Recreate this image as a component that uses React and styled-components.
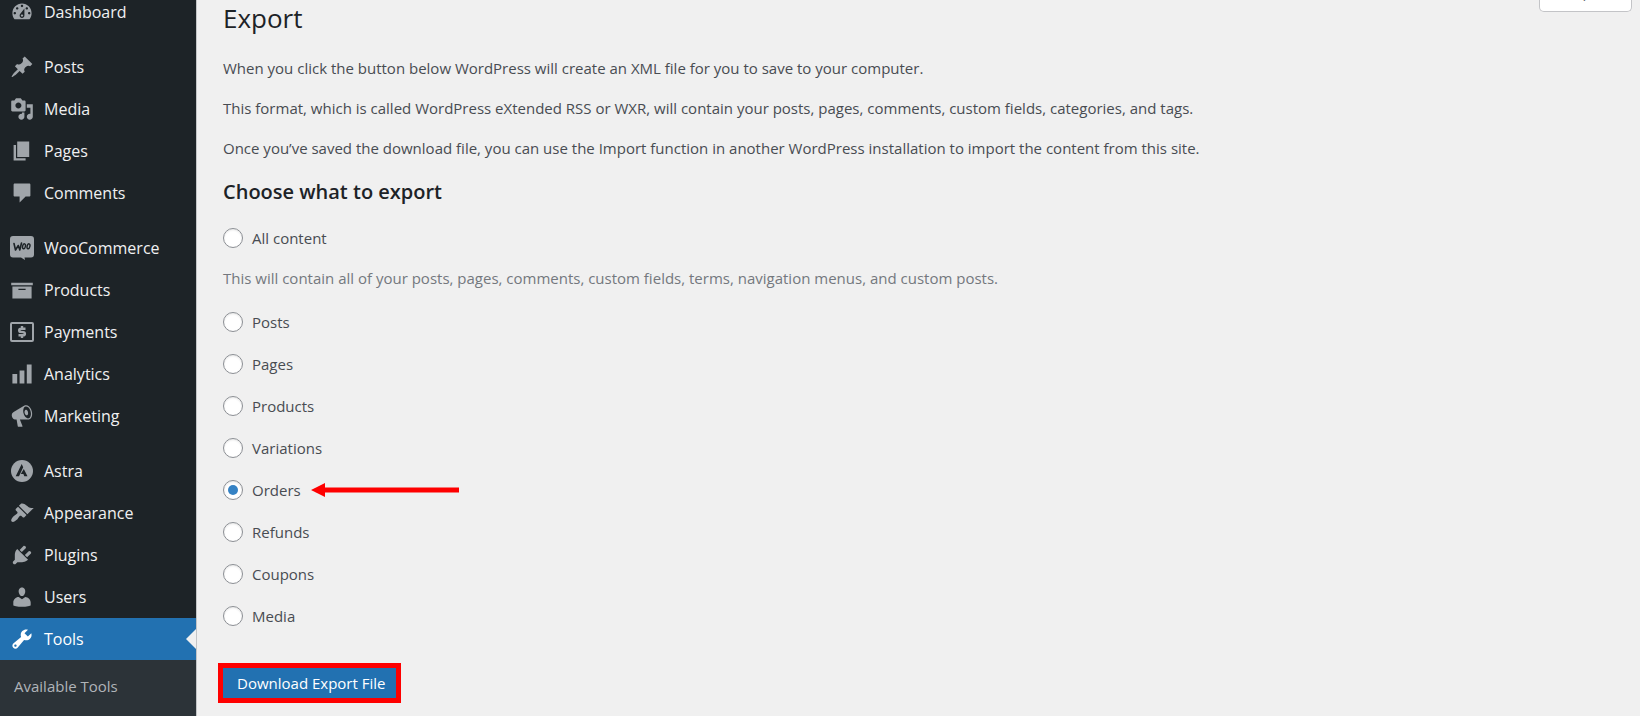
import React, { useState } from "react";
import styled, { createGlobalStyle, css } from "styled-components";

const GlobalStyle = createGlobalStyle`
  *, *::before, *::after { box-sizing: border-box; }
  html, body, #root { height: 100%; }
  body {
    margin: 0;
    overflow: hidden;
    background: #f0f0f0;
    color: #484c52;
    font: 15px/22px "Segoe UI", "Open Sans", "Noto Sans", sans-serif;
  }
`;

const Page = styled.div`
  display: flex;
  height: 100%;
  overflow: hidden;
`;

/* ---------- admin menu ---------- */

const Sidebar = styled.nav`
  flex: 0 0 197px;
  background: #1d2327;
  border-right: 1px solid #c3c5c7;
  overflow: hidden;
`;

const MenuList = styled.ul`
  list-style: none;
  margin: -9px 0 0;
  padding: 0;
`;

const MenuItem = styled.li`
  margin-top: ${(p) => (p.$group ? "13px" : "0")};
`;

const MenuLink = styled.a`
  position: relative;
  display: flex;
  align-items: center;
  gap: 10px;
  height: 42px;
  padding-left: 10px;
  color: #f0f0f1;
  font-size: 16px;
  font-weight: 500;
  text-decoration: none;
  ${(p) =>
    p.$current &&
    css`
      background: #2271b1;
      color: #fff;
      &::after {
        content: "";
        position: absolute;
        right: 0;
        top: 11px;
        border: 10px solid transparent;
        border-left-width: 0;
        border-right-color: #f0f0f0;
      }
    `}
`;

const MenuIcon = styled.svg`
  flex: none;
  width: 24px;
  height: 24px;
  fill: ${(p) => (p.$current ? "#fff" : "#a0a5aa")};
`;

const SubMenu = styled.ul`
  list-style: none;
  margin: 0;
  padding: 9px 0;
  background: #2c3338;
`;

const SubLink = styled.a`
  display: block;
  padding: 6px 14px;
  color: #b0b4b8;
  text-decoration: none;
`;

/* ---------- content ---------- */

const Content = styled.main`
  flex: 1;
  min-width: 0;
  display: flex;
  align-items: flex-start;
  justify-content: space-between;
  padding: 0 8px 0 26px;
`;

const Wrap = styled.div`
  min-width: 0;
`;

const Title = styled.h1`
  margin: 0 0 21px;
  color: #1d2327;
  font-size: 26px;
  font-weight: 400;
  line-height: 36px;
`;

const Text = styled.p`
  margin: 0 0 18px;
`;

const Description = styled.p`
  margin: 0 0 22px;
  color: #74787e;
`;

const SubTitle = styled.h2`
  margin: 0 0 20px;
  color: #1d2327;
  font-size: 20px;
  font-weight: 600;
  line-height: 30px;
`;

const Choices = styled.fieldset`
  margin: 0 0 16px;
  padding: 0;
  border: 0;
`;

const Choice = styled.div`
  display: flex;
  align-items: center;
  margin-bottom: ${(p) => (p.$described ? "18px" : "20px")};
`;

const ChoiceLabel = styled.label`
  display: flex;
  align-items: center;
  gap: 9px;
`;

const Radio = styled.input`
  appearance: none;
  display: grid;
  place-items: center;
  width: 20px;
  height: 20px;
  margin: 0;
  background: #fff;
  border: 1px solid #8c8f94;
  border-radius: 50%;
  box-shadow: inset 0 1px 2px rgba(0, 0, 0, 0.1);
  &:checked::before {
    content: "";
    width: 10px;
    height: 10px;
    border-radius: 50%;
    background: #3582c4;
  }
`;

const Arrow = styled.svg`
  width: 148px;
  height: 14px;
  margin-left: 10px;
  fill: #fe0000;
`;

const Highlight = styled.div`
  width: fit-content;
  margin-left: -5px;
  border: 5px solid #fe0000;
`;

const PrimaryButton = styled.button`
  display: block;
  height: 30px;
  padding: 0 11px 0 14px;
  border: 0;
  background: #2271b1;
  color: #fff;
  font: inherit;
  font-weight: 500;
`;

const HelpTab = styled.button`
  flex: none;
  display: flex;
  align-items: center;
  justify-content: center;
  gap: 10px;
  width: 93px;
  height: 42px;
  margin-top: -30px;
  border: 1px solid #c3c4c7;
  border-top: 0;
  border-radius: 0 0 5px 5px;
  background: #fff;
  color: #646970;
  font: inherit;
`;

const Caret = styled.span`
  border: 5px solid transparent;
  border-top-color: currentColor;
  border-bottom: 0;
`;

/* ---------- icons ---------- */

const paths = {
  dashboard:
    "M3.76 16h12.48c1.1-1.37 1.76-3.11 1.76-5 0-4.42-3.58-8-8-8s-8 3.58-8 8c0 1.89.66 3.63 1.76 5zM10 4c.55 0 1 .45 1 1s-.45 1-1 1-1-.45-1-1 .45-1 1-1zM6 6c.55 0 1 .45 1 1s-.45 1-1 1-1-.45-1-1 .45-1 1-1zm8 0c.55 0 1 .45 1 1s-.45 1-1 1-1-.45-1-1 .45-1 1-1zm-5.370 5.550L12 7v6c0 1.100-.9 2-2 2s-2-.9-2-2c0-.57.24-1.080.63-1.450zM4 10c.55 0 1 .45 1 1s-.45 1-1 1-1-.45-1-1 .45-1 1-1zm12 0c.55 0 1 .45 1 1s-.45 1-1 1-1-.45-1-1 .45-1 1-1zm-5 3c0-.55-.45-1-1-1s-1 .45-1 1 .45 1 1 1 1-.45 1-1z",
  post: "M10.44 3.02l1.82-1.82 6.36 6.35-1.83 1.82c-1.05-.68-2.48-.57-3.41.36l-.75.75c-.92.93-1.04 2.35-.35 3.41l-1.83 1.82-2.41-2.41-2.8 2.79c-.42.42-3.38 2.71-3.8 2.29s1.86-3.39 2.28-3.81l2.79-2.79L4.1 9.36l1.83-1.82c1.05.69 2.48.57 3.4-.36l.75-.75c.93-.92 1.05-2.35.36-3.41z",
  media:
    "M13 11V4c0-.55-.45-1-1-1h-1.67L9 1H5L3.67 3H2c-.55 0-1 .45-1 1v7c0 .55.45 1 1 1h10c.55 0 1-.45 1-1zM7 4.5c1.38 0 2.5 1.12 2.5 2.5S8.38 9.5 7 9.5 4.5 8.38 4.5 7 5.62 4.5 7 4.5zM14 6h5v10.5c0 1.38-1.12 2.5-2.5 2.5S14 17.88 14 16.5s1.12-2.5 2.5-2.5c.17 0 .34.02.5.05V9h-3V6zm-4 8.05V13h2v3.5c0 1.38-1.12 2.5-2.5 2.5S7 17.88 7 16.5 8.12 14 9.5 14c.17 0 .34.02.5.05z",
  page: "M6 15V2h10v13H6zm-1 1h8v2H3V5h2v11z",
  comments:
    "M4 2h12c.55 0 1 .45 1 1v9c0 .55-.45 1-1 1h-3l-5 5v-5H4c-.55 0-1-.45-1-1V3c0-.55.45-1 1-1z",
  archive: "M19 4v2H1V4h18zM2 7h16v10H2V7zm11 3V9H7v1h6z",
  chart: "M18 18V2h-4v16h4zm-6 0V7H8v11h4zm-6 0v-8H2v8h4z",
  megaphone:
    "M18.15 5.94c.46 1.62.38 3.22-.02 4.48-.42 1.28-1.26 2.18-2.3 2.48-.16.06-.26.06-.4.06-.06.02-.12.02-.18.02-.06.02-.14.02-.22.02h-6.8l2.22 5.5c.02.14-.06.26-.14.34-.08.1-.24.16-.34.16H6.95c-.1 0-.26-.06-.34-.16-.08-.08-.16-.2-.14-.34l-1-5.5H4.25l-.02-.02c-.5.06-1.08-.18-1.54-.62s-.88-1.08-1.06-1.88c-.24-.8-.2-1.56-.02-2.2.18-.62.58-1.08 1.06-1.3l.02-.02 9-5.4c.1-.06.18-.1.24-.16.06-.04.14-.08.24-.12.16-.08.28-.12.5-.18 1.04-.3 2.24.1 3.22.98s1.84 2.24 2.26 3.86zm-2.58 5.98h-.02c.4-.1.74-.34 1.04-.7.58-.7.86-1.76.86-3.04 0-.64-.1-1.3-.28-1.98-.34-1.36-1.02-2.5-1.78-3.24s-1.68-1.1-2.46-.88c-.82.22-1.4.96-1.7 2-.32 1.04-.28 2.36.06 3.72.38 1.36 1 2.5 1.8 3.24.78.74 1.62 1.1 2.48.88zm-2.54-7.08c.22-.04.42-.02.62.04.38.16.76.48 1.02 1s.42 1.2.42 1.78c0 .3-.04.56-.12.8-.18.48-.44.84-.86.94-.34.1-.8-.06-1.14-.4s-.64-.86-.78-1.5c-.18-.62-.12-1.24.02-1.72s.48-.84.82-.94z",
  appearance:
    "M14.48 11.06L7.41 3.99l1.5-1.5c.5-.56 2.3-.47 3.51.32 1.21.8 1.43 1.28 2.91 2.1 1.18.64 2.45 1.26 4.45.85zm-.71.71L6.7 4.7 4.93 6.47c-.39.39-.39 1.02 0 1.41l1.06 1.06c.39.39.39 1.03 0 1.42-.6.6-1.43 1.11-2.21 1.69-.35.26-.7.53-1.01.84C1.43 14.23.4 16.08 1.4 17.07c.99 1 2.84-.03 4.18-1.36.31-.31.58-.66.85-1.02.57-.78 1.08-1.61 1.69-2.21.39-.39 1.02-.39 1.41 0l1.06 1.06c.39.39 1.02.39 1.41 0z",
  plugins:
    "M13.11 4.36L9.87 7.6 8 5.73l3.24-3.24c.35-.34 1.05-.2 1.56.32.52.51.66 1.21.31 1.55zm-8 1.77l.91-1.12 9.01 9.01-1.19.84c-.71.71-2.63 1.16-3.82 1.16H6.14L4.9 17.26c-.59.59-1.54.59-2.12 0-.59-.58-.59-1.53 0-2.12l1.24-1.24v-3.88c0-1.13.4-3.19 1.09-3.89zm7.26 3.97l3.24-3.24c.34-.35 1.04-.21 1.55.31.52.51.66 1.21.31 1.55l-3.24 3.25z",
  users:
    "M10 9.25c-2.27 0-2.73-3.44-2.73-3.44C7 4.02 7.82 2 9.97 2c2.16 0 2.98 2.02 2.71 3.81 0 0-.41 3.44-2.68 3.44zm0 2.57L12.72 10c2.39 0 4.52 2.33 4.52 4.53v2.49s-3.65 1.13-7.24 1.13c-3.65 0-7.24-1.13-7.24-1.13v-2.49c0-2.25 1.94-4.48 4.47-4.48z",
  tools:
    "M16.68 9.77c-1.34 1.34-3.3 1.67-4.95.99l-5.41 6.52c-.99.99-2.59.99-3.58 0s-.99-2.59 0-3.57l6.52-5.42c-.68-1.65-.35-3.61.99-4.95 1.28-1.28 3.12-1.62 4.72-1.06l-2.89 2.89 2.82 2.82 2.86-2.87c.53 1.58.18 3.39-1.08 4.65zM3.81 16.21c.4.39 1.04.39 1.43 0 .4-.4.4-1.04 0-1.43-.39-.4-1.03-.4-1.43 0-.39.39-.39 1.03 0 1.43z",
};

const drawings = {
  woo: (
    <>
      <path d="M3 0h18a3 3 0 0 1 3 3v15.500a3 3 0 0 1-3 3h-6.500l.5 2.500-4-2.500H3a3 3 0 0 1-3-3V3a3 3 0 0 1 3-3z" />
      <g fill="none" stroke="#1d2327" strokeLinecap="round" strokeLinejoin="round">
        <path strokeWidth="1.600" d="M4 7.500l1.500 6.500 2.800-4.500 1.500 4.500 1.700-7" />
        <ellipse strokeWidth="1.400" cx="14" cy="10.300" rx="1.400" ry="2.500" transform="rotate(14 14 10.300)" />
        <ellipse strokeWidth="1.400" cx="18.500" cy="10.300" rx="1.400" ry="2.500" transform="rotate(14 18.500 10.300)" />
      </g>
    </>
  ),
  payments: (
    <>
      <rect x="1" y="3" width="22" height="18" rx="1" fill="none" stroke="#a0a5aa" strokeWidth="2" />
      <path
        d="M15.500 8.800h-4.200c-1.500 0-2.100.8-2.100 1.600 0 .9.700 1.400 1.700 1.500l2.200.2c1.100.1 1.800.7 1.800 1.600s-.7 1.600-1.900 1.600H8.500M12 6v2.800M12 15.300V18"
        fill="none"
        stroke="#a0a5aa"
        strokeWidth="2.400"
      />
    </>
  ),
  astra: (
    <>
      <circle cx="12" cy="12" r="11" />
      <path fill="#1d2327" d="M11.700 5l1.500 3.200L9 17.300H5.700zM13.800 10l3.700 7.300h-3.200l-.9-2.200h-2.600z" />
    </>
  ),
};

const menu = [
  { label: "Dashboard", icon: "dashboard" },
  { label: "Posts", icon: "post", group: true },
  { label: "Media", icon: "media" },
  { label: "Pages", icon: "page" },
  { label: "Comments", icon: "comments" },
  { label: "WooCommerce", icon: "woo", group: true },
  { label: "Products", icon: "archive" },
  { label: "Payments", icon: "payments" },
  { label: "Analytics", icon: "chart" },
  { label: "Marketing", icon: "megaphone" },
  { label: "Astra", icon: "astra", group: true },
  { label: "Appearance", icon: "appearance" },
  { label: "Plugins", icon: "plugins" },
  { label: "Users", icon: "users" },
  { label: "Tools", icon: "tools", sub: ["Available Tools", "Import"] },
];

const types = ["Posts", "Pages", "Products", "Variations", "Orders", "Refunds", "Coupons", "Media"];

function Icon({ name, current }) {
  const drawing = drawings[name];
  return (
    <MenuIcon viewBox={drawing ? "0 0 24 24" : "0 0 20 20"} $current={current} aria-hidden="true">
      {drawing || <path d={paths[name]} />}
    </MenuIcon>
  );
}

export default function App() {
  const [selected, setSelected] = useState("Orders");

  const choice = (label) => (
    <Choice key={label} $described={label === "All content"}>
      <ChoiceLabel>
        <Radio
          type="radio"
          name="content"
          value={label}
          checked={selected === label}
          onChange={() => setSelected(label)}
        />
        {label}
      </ChoiceLabel>
      {label === "Orders" && (
        <Arrow viewBox="0 0 148 14" aria-hidden="true">
          <path d="M0 7L14 0v4.500h134v5H14V14z" />
        </Arrow>
      )}
    </Choice>
  );

  return (
    <>
      <GlobalStyle />
      <Page>
        <Sidebar aria-label="Main menu">
          <MenuList>
            {menu.map((item) => (
              <MenuItem key={item.label} $group={item.group}>
                <MenuLink href="#" $current={!!item.sub}>
                  <Icon name={item.icon} current={!!item.sub} />
                  {item.label}
                </MenuLink>
                {item.sub && (
                  <SubMenu>
                    {item.sub.map((s) => (
                      <li key={s}>
                        <SubLink href="#">{s}</SubLink>
                      </li>
                    ))}
                  </SubMenu>
                )}
              </MenuItem>
            ))}
          </MenuList>
        </Sidebar>
        <Content>
          <Wrap>
            <Title>Export</Title>
            <Text>When you click the button below WordPress will create an XML file for you to save to your computer.</Text>
            <Text>
              This format, which is called WordPress eXtended RSS or WXR, will contain your posts, pages, comments,
              custom fields, categories, and tags.
            </Text>
            <Text>
              Once you’ve saved the download file, you can use the Import function in another WordPress installation to
              import the content from this site.
            </Text>
            <SubTitle>Choose what to export</SubTitle>
            <Choices aria-label="Content to export">
              {choice("All content")}
              <Description>
                This will contain all of your posts, pages, comments, custom fields, terms, navigation menus, and custom
                posts.
              </Description>
              {types.map(choice)}
            </Choices>
            <Highlight>
              <PrimaryButton type="button">Download Export File</PrimaryButton>
            </Highlight>
          </Wrap>
          <HelpTab type="button">
            Help
            <Caret />
          </HelpTab>
        </Content>
      </Page>
    </>
  );
}
